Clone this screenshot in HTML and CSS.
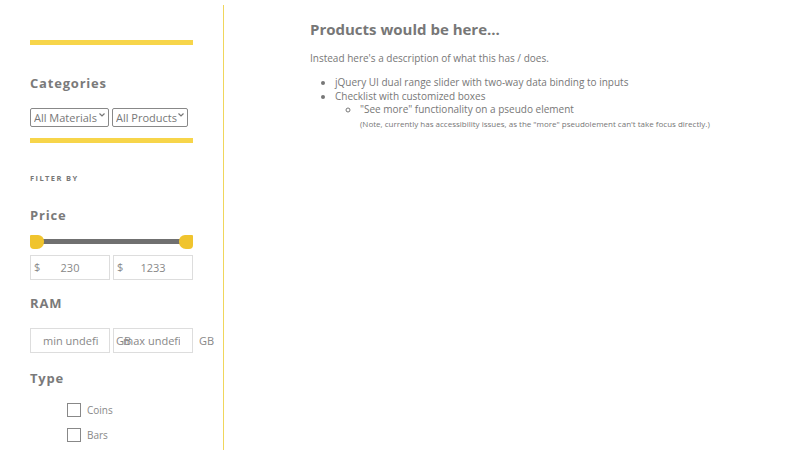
FILE: index.html
```html
<!DOCTYPE html>
<html lang="en">
<head>
    <meta charset="UTF-8">
    <meta name="viewport" content="width=device-width, initial-scale=1.0">
    <title>Product Filters</title>
    <link rel="stylesheet" href="styles.css">
</head>
<body>
    <div class="page">
        <aside class="sidebar">
            <div class="bar"></div>

            <h2 class="filter-title categories-title">Categories</h2>
            <div class="selects">
                <label class="select-wrap select-materials">
                    <select class="cat-select">
                        <option>All Materials</option>
                    </select>
                    <svg class="chevron" width="6" height="4" viewBox="0 0 6 4"><path d="M0.5 0.5 L3 3 L5.5 0.5" fill="none" stroke="#777" stroke-width="1.2"/></svg>
                </label>
                <label class="select-wrap select-products">
                    <select class="cat-select">
                        <option>All Products</option>
                    </select>
                    <svg class="chevron" width="6" height="4" viewBox="0 0 6 4"><path d="M0.5 0.5 L3 3 L5.5 0.5" fill="none" stroke="#777" stroke-width="1.2"/></svg>
                </label>
            </div>
            <div class="bar bar-bottom"></div>

            <h3 class="filter-by">Filter by</h3>

            <h2 class="filter-title price-title">Price</h2>
            <div class="slider">
                <div class="slider-track"></div>
                <span class="handle handle-min"></span>
                <span class="handle handle-max"></span>
            </div>
            <div class="range-inputs">
                <label class="field">
                    <span class="prefix">$</span>
                    <input type="text" class="range-input" value="230">
                </label>
                <label class="field">
                    <span class="prefix">$</span>
                    <input type="text" class="range-input" value="1233">
                </label>
            </div>

            <h2 class="filter-title ram-title">RAM</h2>
            <div class="range-inputs">
                <label class="field">
                    <input type="text" class="range-input ram-input" value="min undefined">
                    <span class="suffix">GB</span>
                </label>
                <label class="field">
                    <input type="text" class="range-input ram-input ram-max" value="max undefined">
                    <span class="suffix">GB</span>
                </label>
            </div>

            <h2 class="filter-title type-title">Type</h2>
            <ul class="checklist">
                <li class="check-item">
                    <span class="check-box"></span>
                    <span class="check-label">Coins</span>
                </li>
                <li class="check-item">
                    <span class="check-box"></span>
                    <span class="check-label">Bars</span>
                </li>
            </ul>
        </aside>

        <main class="content">
            <h1 class="content-title">Products would be here...</h1>
            <p class="intro">Instead here's a description of what this has / does.</p>
            <ul class="features">
                <li>jQuery UI dual range slider with two-way data binding to inputs</li>
                <li>Checklist with customized boxes
                    <ul class="sub-features">
                        <li>"See more" functionality on a pseudo element
                            <small class="note">(Note, currently has accessibility issues, as the "more" pseudolement can't take focus directly.)</small>
                        </li>
                    </ul>
                </li>
            </ul>
        </main>
    </div>
</body>
</html>
```

FILE: styles.css
```css
/* reset */
* {
    margin: 0;
    padding: 0;
    box-sizing: border-box;
}

body {
    font-family: 'Open Sans', 'Liberation Sans', Arial, sans-serif;
    color: #777;
    background: #fff;
    overflow: hidden;
}

.page {
    display: flex;
    height: 450px;
    padding-top: 5px;
}

/* sidebar */
.sidebar {
    width: 224px;
    flex-shrink: 0;
    padding: 35px 30px 0 30px;
    border-right: 1px solid #f0d65c;
}

.bar {
    width: 163px;
    height: 5px;
    background: #f7d54a;
}

.bar-bottom {
    margin-top: 11px;
}

.filter-title {
    font-size: 13px;
    font-weight: 700;
    letter-spacing: 0.8px;
    color: #7a7a7a;
    line-height: 18px;
}

.categories-title {
    margin-top: 29px;
    margin-bottom: 13px;
}

.selects {
    display: flex;
    gap: 3px;
}

.select-wrap {
    position: relative;
    display: block;
}

.select-materials {
    width: 79px;
}

.select-products {
    width: 76px;
}

.cat-select {
    -webkit-appearance: none;
    appearance: none;
    width: 100%;
    font-family: 'Open Sans', 'Liberation Sans', Arial, sans-serif;
    font-size: 11px;
    color: #777;
    height: 19px;
    border: 1px solid #888;
    border-radius: 2px;
    background: #fff;
    padding: 0 0 0 3px;
}

.chevron {
    position: absolute;
    right: 4px;
    top: 8px;
}

.filter-by {
    font-size: 7.5px;
    font-weight: 700;
    letter-spacing: 1.4px;
    text-transform: uppercase;
    color: #777;
    margin-top: 30px;
}

.price-title {
    margin-top: 23px;
    margin-bottom: 11px;
}

/* slider */
.slider {
    position: relative;
    width: 163px;
    height: 14px;
    margin-bottom: 6px;
}

.slider-track {
    position: absolute;
    left: 6px;
    right: 6px;
    top: 4px;
    height: 5px;
    background: #707070;
}

.handle {
    position: absolute;
    top: 0;
    width: 14px;
    height: 14px;
    background: #f0c42e;
}

.handle-min {
    left: 0;
    border-radius: 1px 6px 7px 4px;
}

.handle-max {
    right: 0;
    border-radius: 6px 1px 4px 7px;
}

.range-inputs {
    display: flex;
    gap: 3px;
}

.field {
    position: relative;
    display: block;
    width: 80px;
}

.prefix {
    position: absolute;
    left: 4px;
    top: 4px;
    font-size: 11px;
    color: #888;
}

.suffix {
    position: absolute;
    left: 86px;
    top: 5px;
    z-index: 2;
    font-size: 11px;
    color: #888;
}

.range-input {
    width: 80px;
    height: 25px;
    border: 1px solid #ddd;
    font-family: 'Open Sans', 'Liberation Sans', Arial, sans-serif;
    font-size: 11px;
    color: #888;
    text-align: center;
    padding: 0 10px;
    outline: none;
}

.ram-input {
    text-align: left;
    padding-left: 12px;
}

.ram-max {
    padding-left: 9px;
    padding-right: 12px;
}

.ram-title {
    margin-top: 14px;
    margin-bottom: 16px;
}

.type-title {
    margin-top: 16px;
}

/* checklist */
.checklist {
    list-style: none;
    padding-left: 37px;
    margin-top: 16px;
}

.check-item {
    display: flex;
    align-items: center;
    gap: 6px;
    margin-bottom: 11px;
}

.check-box {
    width: 14px;
    height: 14px;
    border: 1px solid #888;
}

.check-label {
    font-size: 10px;
    color: #888;
}

/* main content */
.content {
    padding: 13px 0 0 86px;
}

.content-title {
    font-size: 15px;
    font-weight: 700;
    color: #777;
    line-height: 22px;
    margin-bottom: 11px;
}

.intro {
    font-size: 10px;
    line-height: 14px;
    margin-bottom: 10px;
}

.features {
    font-size: 10px;
    line-height: 14px;
    padding-left: 25px;
}

.sub-features {
    list-style-type: circle;
    padding-left: 25px;
}

.sub-features li {
    line-height: 13px;
}

.note {
    display: block;
    font-size: 8px;
    line-height: 14px;
    margin-top: 1px;
}
```
